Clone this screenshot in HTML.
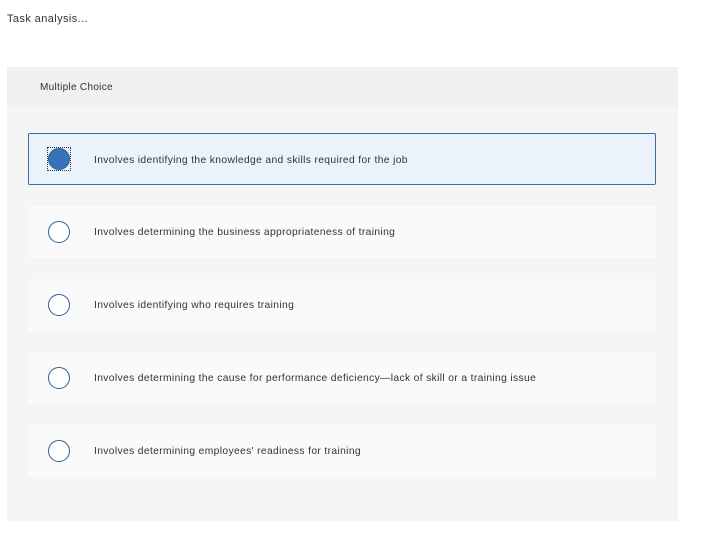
<html><head><style>
body{margin:0;background:#fff;font-family:"Liberation Sans",sans-serif;width:721px;height:542px;position:relative;overflow:hidden}
.t{position:absolute;left:7px;top:13px;font-size:11px;letter-spacing:0.4px;color:#333}
.p{position:absolute;left:7px;top:67px;width:671px;height:454px;background:#f5f5f5}
.h{height:40px;background:#f0f0f0;font-size:10px;letter-spacing:0.3px;color:#333;line-height:41px;padding-left:33px}
.o{position:absolute;left:21px;width:628px;height:52px;background:#fafafa;box-sizing:border-box;border-radius:2px}
.o span{position:absolute;left:66px;top:1px;line-height:52px;font-size:10.3px;letter-spacing:0.35px;color:#333}
.r{position:absolute;left:20px;top:15px;width:22px;height:22px;box-sizing:border-box;border:1.5px solid #2f5f95;border-radius:50%;background:#fff}
.s{background:#eaf2fb;border:1px solid #3a6ea5}
.s .r{background:#3872b8;left:19px;top:14px}
.f{position:absolute;left:18px;top:13px;width:24px;height:24px;border:1px dotted #333;box-sizing:border-box}
</style></head><body>
<div class="t">Task analysis...</div>
<div class="p"><div class="h">Multiple Choice</div>
<div class="o s" style="top:66px"><div class="r"></div><div class="f"></div><span style="left:65px">Involves identifying the knowledge and skills required for the job</span></div>
<div class="o" style="top:139px"><div class="r"></div><span>Involves determining the business appropriateness of training</span></div>
<div class="o" style="top:212px"><div class="r"></div><span>Involves identifying who requires training</span></div>
<div class="o" style="top:285px"><div class="r"></div><span>Involves determining the cause for performance deficiency—lack of skill or a training issue</span></div>
<div class="o" style="top:358px"><div class="r"></div><span>Involves determining employees' readiness for training</span></div>
</div>
</body></html>
